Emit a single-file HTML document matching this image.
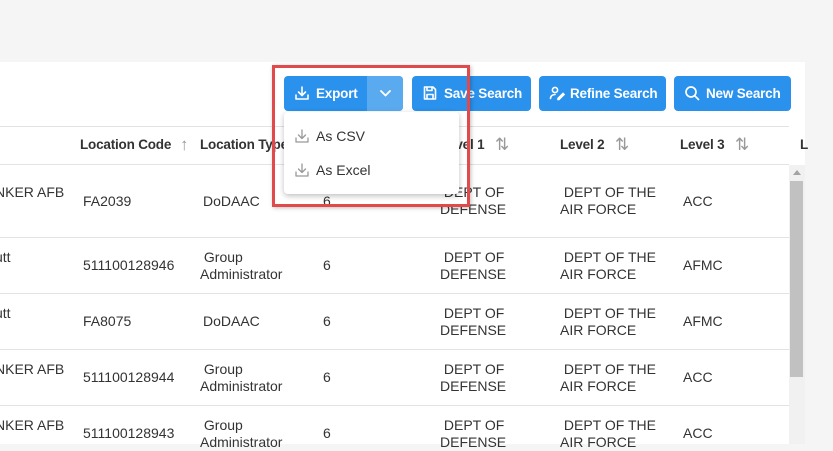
<!DOCTYPE html>
<html><head><meta charset="utf-8"><style>
*{margin:0;padding:0;box-sizing:border-box}
html,body{width:833px;height:444px}
body{background:#f5f5f5;font-family:"Liberation Sans",Arial,sans-serif;position:relative;overflow:hidden;color:#333}
.panel{position:absolute;left:0;top:62px;width:805px;height:382px;background:#fff}
.abs{position:absolute}
.btn{position:absolute;top:76px;height:35px;background:#2a91ec;border-radius:4px;color:#fff;font-weight:bold;font-size:13.5px;line-height:35px;white-space:nowrap;letter-spacing:-0.2px}
.btn svg{position:absolute;top:9px}
.hl{position:absolute;left:0;width:789px;height:1px;background:#e3e3e3}
.t{position:absolute;font-size:14px;line-height:17px;color:#333;white-space:nowrap}
.h{position:absolute;font-size:13.5px;font-weight:bold;color:#333;top:137px;white-space:nowrap;letter-spacing:-0.2px}
.arr{position:absolute;color:#999;font-weight:normal;font-size:17px;top:-2px}
</style></head><body>
<div class="panel"></div>
<div class="hl" style="top:126px"></div>
<div class="hl" style="top:164px"></div>
<div class="hl" style="top:237px"></div>
<div class="hl" style="top:293px"></div>
<div class="hl" style="top:349px"></div>
<div class="hl" style="top:405px"></div>
<div class="abs" style="left:789px;top:165px;width:16px;height:279px;background:#f1f1f1"></div>
<div class="abs" style="left:790px;top:181px;width:13px;height:196px;background:#c1c1c1"></div>
<div class="abs" style="left:793px;top:170px;width:0;height:0;border-left:4px solid transparent;border-right:4px solid transparent;border-bottom:5px solid #a3a3a3"></div>

<div class="h" style="left:80px">Location Code</div><span class="arr" style="left:180px;top:135px">↑</span>
<div class="h" style="left:200px">Location Type</div>
<div class="h" style="left:440px">Level 1</div><span class="arr" style="left:495px;top:135px">⇅</span>
<div class="h" style="left:560px">Level 2</div><span class="arr" style="left:615px;top:135px">⇅</span>
<div class="h" style="left:680px">Level 3</div><span class="arr" style="left:735px;top:135px">⇅</span>
<div class="h" style="left:800px">L</div>

<div class="t" style="left:-5px;top:184px">NKER AFB</div>
<div class="t" style="left:83px;top:193px">FA2039</div>
<div class="t" style="left:203px;top:193px">DoDAAC</div>
<div class="t" style="left:323px;top:193px">6</div>
<div class="t" style="left:440px;top:184px">&nbsp;DEPT OF<br>DEFENSE</div>
<div class="t" style="left:560px;top:184px">&nbsp;DEPT OF THE<br>AIR FORCE</div>
<div class="t" style="left:683px;top:193px">ACC</div>

<div class="t" style="left:-5px;top:249px">utt</div>
<div class="t" style="left:83px;top:257px">511100128946</div>
<div class="t" style="left:200px;top:249px">&nbsp;Group<br>Administrator</div>
<div class="t" style="left:323px;top:257px">6</div>
<div class="t" style="left:440px;top:249px">&nbsp;DEPT OF<br>DEFENSE</div>
<div class="t" style="left:560px;top:249px">&nbsp;DEPT OF THE<br>AIR FORCE</div>
<div class="t" style="left:683px;top:257px">AFMC</div>

<div class="t" style="left:-5px;top:305px">utt</div>
<div class="t" style="left:83px;top:313px">FA8075</div>
<div class="t" style="left:203px;top:313px">DoDAAC</div>
<div class="t" style="left:323px;top:313px">6</div>
<div class="t" style="left:440px;top:305px">&nbsp;DEPT OF<br>DEFENSE</div>
<div class="t" style="left:560px;top:305px">&nbsp;DEPT OF THE<br>AIR FORCE</div>
<div class="t" style="left:683px;top:313px">AFMC</div>

<div class="t" style="left:-5px;top:361px">NKER AFB</div>
<div class="t" style="left:83px;top:369px">511100128944</div>
<div class="t" style="left:200px;top:361px">&nbsp;Group<br>Administrator</div>
<div class="t" style="left:323px;top:369px">6</div>
<div class="t" style="left:440px;top:361px">&nbsp;DEPT OF<br>DEFENSE</div>
<div class="t" style="left:560px;top:361px">&nbsp;DEPT OF THE<br>AIR FORCE</div>
<div class="t" style="left:683px;top:369px">ACC</div>

<div class="t" style="left:-5px;top:417px">NKER AFB</div>
<div class="t" style="left:83px;top:425px">511100128943</div>
<div class="t" style="left:200px;top:417px">&nbsp;Group<br>Administrator</div>
<div class="t" style="left:323px;top:425px">6</div>
<div class="t" style="left:440px;top:417px">&nbsp;DEPT OF<br>DEFENSE</div>
<div class="t" style="left:560px;top:417px">&nbsp;DEPT OF THE<br>AIR FORCE</div>
<div class="t" style="left:683px;top:425px">ACC</div>

<div class="btn" style="left:284px;width:119px">
 <svg style="left:10px" width="16" height="16" viewBox="0 0 16 16" fill="none" stroke="#fff" stroke-width="1.6" stroke-linecap="round" stroke-linejoin="round"><path d="M8 2v8M4.5 7L8 10.5 11.5 7M2 10v4h12v-4"/></svg>
 <span style="position:absolute;left:32px">Export</span>
 <div style="position:absolute;left:83px;top:0;width:36px;height:35px;background:#5aaaf0;border-radius:0 4px 4px 0"></div>
 <svg style="left:95px;top:12px" width="13" height="10" viewBox="0 0 13 10" fill="none" stroke="#fff" stroke-width="1.8" stroke-linecap="round" stroke-linejoin="round"><path d="M2 3l4.5 4.5L11 3"/></svg>
</div>
<div class="btn" style="left:412px;width:119px">
 <svg style="left:10px" width="16" height="16" viewBox="0 0 16 16" fill="none" stroke="#fff" stroke-width="1.6" stroke-linejoin="round"><path d="M2.5 2h8.5l2.5 2.5V14h-11z M5 2v3.5h5V2 M5 14V9.5h6V14"/></svg>
 <span style="position:absolute;left:32px">Save Search</span>
</div>
<div class="btn" style="left:539px;width:127px">
 <svg style="left:10px" width="16" height="16" viewBox="0 0 16 16" fill="none" stroke="#fff" stroke-width="1.6" stroke-linecap="round"><circle cx="6" cy="5" r="2.6"/><path d="M1.5 13.5c0-2.5 2-4 4.5-4 M9 13.5l5-5 1 1-5 5h-1z"/></svg>
 <span style="position:absolute;left:31px">Refine Search</span>
</div>
<div class="btn" style="left:674px;width:117px">
 <svg style="left:10px" width="16" height="16" viewBox="0 0 16 16" fill="none" stroke="#fff" stroke-width="1.7" stroke-linecap="round"><circle cx="7" cy="7" r="5"/><path d="M10.7 10.7L14.5 14.5"/></svg>
 <span style="position:absolute;left:32px">New Search</span>
</div>

<div class="abs" style="left:284px;top:112px;width:175px;height:82px;background:#fff;border-radius:4px;box-shadow:0 2px 6px rgba(0,0,0,.25)">
 <svg class="abs" style="left:10px;top:16px" width="16" height="16" viewBox="0 0 16 16" fill="none" stroke="#999" stroke-width="1.3" stroke-linecap="round" stroke-linejoin="round"><path d="M8 2v8M4.5 7L8 10.5 11.5 7M2 10v4h12v-4"/></svg>
 <div class="t" style="left:32px;top:16px">As CSV</div>
 <svg class="abs" style="left:10px;top:50px" width="16" height="16" viewBox="0 0 16 16" fill="none" stroke="#999" stroke-width="1.3" stroke-linecap="round" stroke-linejoin="round"><path d="M8 2v8M4.5 7L8 10.5 11.5 7M2 10v4h12v-4"/></svg>
 <div class="t" style="left:32px;top:50px">As Excel</div>
</div>

<div class="abs" style="left:272px;top:65px;width:198px;height:142px;border:3px solid #e04a4a;box-shadow:1px 1px 4px rgba(0,0,0,.25)"></div>
</body></html>
